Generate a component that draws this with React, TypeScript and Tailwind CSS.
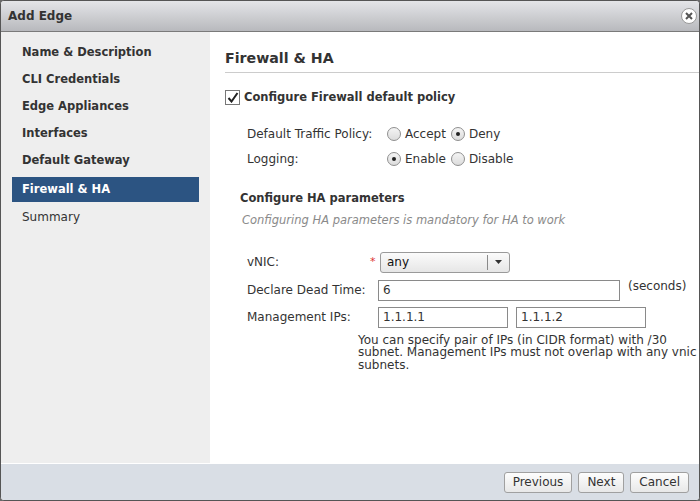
import React from 'react';

const navItems = [
  { label: 'Name & Description', bold: true },
  { label: 'CLI Credentials', bold: true },
  { label: 'Edge Appliances', bold: true },
  { label: 'Interfaces', bold: true },
  { label: 'Default Gateway', bold: true },
  { label: 'Firewall & HA', bold: true, active: true },
  { label: 'Summary', bold: false },
];

function Radio({ checked, label }: { checked?: boolean; label: string }) {
  return (
    <label className="flex items-center gap-[4px]">
      <span className="w-[14px] h-[14px] rounded-full border border-[#8f8f8f] bg-gradient-to-b from-[#f4f4f4] to-[#dcdcdc] flex items-center justify-center">
        {checked && <span className="w-[4px] h-[4px] rounded-full bg-[#222]" />}
      </span>
      <span>{label}</span>
    </label>
  );
}

function TextBox({ value, className }: { value: string; className: string }) {
  return (
    <div className={'h-[21px] border border-[#8a8a8a] bg-white px-[4px] flex items-center ' + className}>
      {value}
    </div>
  );
}

export default function App() {
  return (
    <div
      className="w-[700px] h-[501px] bg-[#6b6b6b] text-[12px] text-[#333]"
      style={{ fontFamily: '"DejaVu Sans", Verdana, sans-serif' }}
    >
      <div className="h-full flex flex-col rounded-[4px] border border-[#555] overflow-hidden bg-white">
        {/* Title bar */}
        <div className="h-[31px] shrink-0 flex items-center justify-between px-[7px] bg-gradient-to-b from-[#e4e5e8] to-[#b8b9bd] border-b border-[#7a7a7a]">
          <span className="font-bold text-[12px] text-[#333]">Add Edge</span>
          <span className="w-[16px] h-[16px] rounded-full bg-white border border-[#999] flex items-center justify-center -mr-[5px]">
            <svg width="8" height="8" viewBox="0 0 8 8">
              <path d="M1 1L7 7M7 1L1 7" stroke="#555" strokeWidth="2" />
            </svg>
          </span>
        </div>

        {/* Body */}
        <div className="flex-1 flex min-h-0">
          {/* Sidebar */}
          <div className="w-[209px] shrink-0 bg-[#eeeeee] pt-[7px] mb-[1px]">
            <ul className="flex flex-col">
              {navItems.map((item) =>
                item.active ? (
                  <li
                    key={item.label}
                    className="ml-[11px] mr-[11px] h-[25px] mt-[3px] mb-[1px] bg-[#2c5482] text-white font-bold text-[11.5px] pl-[10px] flex items-center"
                  >
                    {item.label}
                  </li>
                ) : (
                  <li
                    key={item.label}
                    className={
                      'h-[27px] pl-[21px] flex items-center text-[#333] ' +
                      (item.bold ? 'font-bold text-[11.5px]' : 'text-[12px]')
                    }
                  >
                    {item.label}
                  </li>
                ),
              )}
            </ul>
          </div>

          {/* Main */}
          <div className="flex-1 bg-white pl-[15px] pr-[15px] pt-[17px]">
            <h2 className="text-[14.2px] leading-[18px] font-bold text-[#333] pb-[5px] border-b border-[#cccccc]">Firewall & HA</h2>

            <label className="mt-[16px] flex items-center gap-[4px] font-bold text-[11.5px]">
              <span className="w-[15px] h-[15px] border border-[#777] bg-white flex items-center justify-center">
                <svg width="12" height="11" viewBox="0 0 12 11">
                  <path d="M1.5 6L4.5 9.5L10.5 1" stroke="#222" strokeWidth="2" fill="none" />
                </svg>
              </span>
              Configure Firewall default policy
            </label>

            <div className="mt-[19px] pl-[22px] flex flex-col gap-[7px]">
              <div className="flex items-center h-[18px]">
                <span className="w-[140px]">Default Traffic Policy:</span>
                <div className="flex gap-[5px]">
                  <Radio label="Accept" />
                  <Radio label="Deny" checked />
                </div>
              </div>
              <div className="flex items-center h-[18px]">
                <span className="w-[140px]">Logging:</span>
                <div className="flex gap-[5px]">
                  <Radio label="Enable" checked />
                  <Radio label="Disable" />
                </div>
              </div>
            </div>

            <div className="mt-[22px] pl-[15px]">
              <div className="font-bold text-[11.5px]">Configure HA parameters</div>
              <div className="mt-[4px] italic text-[11.5px] text-[#8a8a8a] pl-[2px]">
                Configuring HA parameters is mandatory for HA to work
              </div>
            </div>

            <div className="mt-[23px] pl-[22px] flex flex-col gap-[6px]">
              <div className="flex items-center mb-[1px]">
                <span className="w-[123px]">vNIC:</span>
                <span className="w-[10px] text-[#d33] text-[11px]">*</span>
                <div className="w-[130px] h-[21px] rounded-[3px] border border-[#9a9a9a] bg-gradient-to-b from-[#fbfbfb] to-[#e6e6e6] flex items-center">
                  <span className="flex-1 pl-[6px] text-[#111]">any</span>
                  <span className="w-[22px] h-[15px] border-l border-[#8a8a8a] flex items-center justify-center">
                    <svg width="7" height="4" viewBox="0 0 7 4">
                      <path d="M0 0H7L3.5 4Z" fill="#333" />
                    </svg>
                  </span>
                </div>
              </div>
              <div className="flex items-start">
                <span className="w-[131px] h-[21px] flex items-center">Declare Dead Time:</span>
                <TextBox value="6" className="w-[242px]" />
                <span className="ml-[8px] -mt-[3px]">(seconds)</span>
              </div>
              <div className="flex items-center">
                <span className="w-[131px]">Management IPs:</span>
                <TextBox value="1.1.1.1" className="w-[130px]" />
                <TextBox value="1.1.1.2" className="w-[130px] ml-[8px]" />
              </div>
              <div className="pl-[111px] w-[455px] leading-[12.5px]">
                You can specify pair of IPs (in CIDR format) with /30 subnet. Management IPs must not overlap with any vnic subnets.
              </div>
            </div>
          </div>
        </div>

        {/* Footer */}
        <div className="h-[36px] shrink-0 bg-[#d9dee5] flex items-center justify-end gap-[6px] pr-[10px]">
          {['Previous', 'Next', 'Cancel'].map((b) => (
            <button
              key={b}
              className="h-[21px] px-[8px] rounded-[3px] border border-[#a0a0a0] bg-gradient-to-b from-[#fdfdfd] to-[#e8e8e8] text-[12px] text-[#333]"
            >
              {b}
            </button>
          ))}
        </div>
      </div>
    </div>
  );
}
